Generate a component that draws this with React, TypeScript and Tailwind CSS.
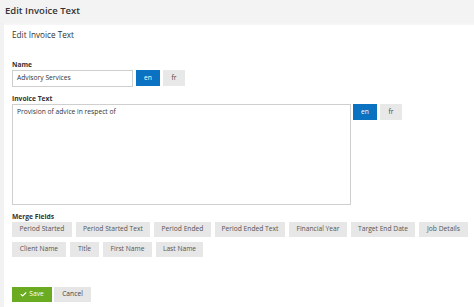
import { Check } from "lucide-react";

const FONT = { fontFamily: '"Open Sans", "Noto Sans", sans-serif' };

// widths measured off the reference chips
const MERGE_ROWS: { label: string; w: string }[][] = [
  [
    { label: "Period Started", w: "w-[60px]" },
    { label: "Period Started Text", w: "w-[74px]" },
    { label: "Period Ended", w: "w-[57px]" },
    { label: "Period Ended Text", w: "w-[70px]" },
    { label: "Financial Year", w: "w-[58px]" },
    { label: "Target End Date", w: "w-[64px]" },
    { label: "Job Details", w: "w-[49px]" },
  ],
  [
    { label: "Client Name", w: "w-[54px]" },
    { label: "Title", w: "w-[29px]" },
    { label: "First Name", w: "w-[49px]" },
    { label: "Last Name", w: "w-[47px]" },
  ],
];

function LangButtons() {
  return (
    <div className="flex gap-[3px]">
      <button className="flex h-[16px] w-[24px] items-center justify-center bg-[#0b72c1] text-[6.7px] text-white">en</button>
      <button className="flex h-[16px] w-[22px] items-center justify-center bg-[#e8e8e8] text-[6.7px] text-[#444]">fr</button>
    </div>
  );
}

export default function App() {
  return (
    <div className="h-[307px] w-[474px] overflow-hidden bg-white text-[#333]" style={FONT}>
      {/* page header */}
      <div className="flex h-[23px] items-center bg-[#f3f3f4] px-[5px] text-[9.5px] font-semibold text-[#333]">
        Edit Invoice Text
      </div>

      <div className="flex h-[284px]">
        <div className="w-[4px] bg-[#f2f2f2]" />
        <div className="flex-1 border-t-2 border-[#f6f6f6] pl-[8px]">
          <div className="mt-[4px] text-[8.2px] leading-[12px] font-medium">Edit Invoice Text</div>

          {/* name */}
          <div className="mt-[19px] text-[6.7px] leading-[10px] font-bold">Name</div>
          <div className="flex items-start gap-[3px]">
            <div className="flex h-[17px] w-[121px] items-center border border-[#cfcfcf] px-[4px] text-[6.7px]">
              Advisory Services
            </div>
            <LangButtons />
          </div>

          {/* invoice text */}
          <div className="mt-[7px] text-[6.7px] leading-[10px] font-bold">Invoice Text</div>
          <div className="flex items-start gap-[2px]">
            <div className="h-[101px] w-[339px] border border-[#cfcfcf] px-[4px] py-[2px] text-[6.7px] leading-[10px]">
              Provision of advice in respect of
            </div>
            <LangButtons />
          </div>

          {/* merge fields */}
          <div className="mt-[7px] text-[6.7px] leading-[10px] font-bold">Merge Fields</div>
          <div className="flex flex-col gap-[5px]">
            {MERGE_ROWS.map((row, r) => (
              <div key={r} className="flex gap-[4px]">
                {row.map((m) => (
                  <span
                    key={m.label}
                    className={`flex h-[15px] shrink-0 items-center justify-center whitespace-nowrap bg-[#e7e7e7] text-[6.7px] text-[#555] ${m.w}`}
                  >
                    {m.label}
                  </span>
                ))}
              </div>
            ))}
          </div>

          {/* actions */}
          <div className="mt-[30px] flex gap-[2px]">
            <button className="flex h-[15px] w-[40px] items-center justify-center gap-[2px] bg-[#6aab21] text-[6.7px] text-white">
              <Check size={7} strokeWidth={4} />
              Save
            </button>
            <button className="flex h-[15px] w-[37px] items-center justify-center bg-[#e6e6e6] text-[6.7px] text-[#444]">
              Cancel
            </button>
          </div>
        </div>
      </div>
    </div>
  );
}
